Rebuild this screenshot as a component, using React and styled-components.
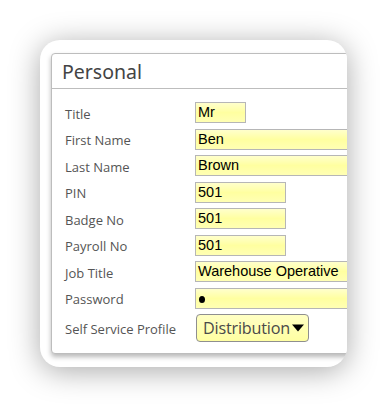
import React from "react";
import styled, { createGlobalStyle } from "styled-components";

const Global = createGlobalStyle`
  html, body { margin: 0; padding: 0; background: #ffffff; }
  body { width: 387px; height: 407px; overflow: hidden; }
`;

const Page = styled.div`
  padding: 40px 0 0 40px;
`;

const Card = styled.div`
  width: 307px;
  height: 327px;
  box-sizing: border-box;
  background: #ffffff;
  border-radius: 20px;
  box-shadow: 0 4px 30px rgba(0, 0, 0, 0.34);
  overflow: hidden;
  padding: 13px 0 0 11px;
`;

const Panel = styled.section`
  width: 420px;
  box-sizing: border-box;
  border: 1px solid #bdbdbd;
  border-radius: 4px 0 0 4px;
  background: #ffffff;
  box-shadow: 0 3px 5px rgba(0, 0, 0, 0.28);
`;

const Header = styled.h2`
  margin: 0;
  height: 35px;
  box-sizing: border-box;
  border-bottom: 1px solid #bdbdbd;
  padding: 6px 0 0 10px;
  font-family: "Noto Sans", sans-serif;
  font-weight: 400;
  font-size: 19.5px;
  line-height: 24px;
  color: #444444;
`;

const Body = styled.div`
  display: grid;
  grid-template-columns: 130px 1fr;
  row-gap: 5.5px;
  align-items: center;
  padding: 13px 0 11px 13px;
`;

const Label = styled.label`
  font-family: "Open Sans", sans-serif;
  font-size: 13px;
  color: #555555;
  line-height: 18px;
  padding-top: 2px;
`;

const Input = styled.div`
  box-sizing: border-box;
  height: 21px;
  width: ${(p) => p.$w || "300px"};
  border: 1px solid #b6b6b6;
  background: linear-gradient(to bottom, #ffffcc 0%, #ffffa0 50%, #ffffb4 100%);
  font-family: "Liberation Sans", Arial, sans-serif;
  font-size: 14.5px;
  line-height: 19px;
  color: #000000;
  padding-left: 2px;
  white-space: nowrap;
  overflow: hidden;
`;

const Dot = styled.span`
  display: inline-block;
  width: 6px;
  height: 7px;
  border-radius: 50%;
  background: #000;
  margin: 7px 0 0 1px;
  vertical-align: top;
`;

const Select = styled.div`
  box-sizing: border-box;
  height: 28px;
  width: 113px;
  margin-left: 1px;
  display: flex;
  align-items: center;
  gap: 2px;
  padding-left: 6px;
  border: 1px solid #8f8f8f;
  border-radius: 4px;
  background: linear-gradient(to bottom, #ffffc4, #ffffa2);
  font-family: "Open Sans", sans-serif;
  font-size: 16.2px;
  letter-spacing: -0.2px;
  color: #4a4a4a;
`;

const Arrow = styled.svg`
  width: 12px;
  height: 8px;
  flex: none;
`;

const fields = [
  ["Title", "Mr", "51px"],
  ["First Name", "Ben"],
  ["Last Name", "Brown"],
  ["PIN", "501", "91px"],
  ["Badge No", "501", "91px"],
  ["Payroll No", "501", "91px"],
  ["Job Title", "Warehouse Operative"],
];

export default function App() {
  return (
    <>
      <Global />
      <Page>
        <Card>
          <Panel>
            <Header>Personal</Header>
            <Body>
              {fields.map(([l, v, w]) => (
                <React.Fragment key={l}>
                  <Label>{l}</Label>
                  <Input $w={w}>{v}</Input>
                </React.Fragment>
              ))}
              <Label>Password</Label>
              <Input>
                <Dot />
              </Input>
              <Label>Self Service Profile</Label>
              <Select>
                Distribution
                <Arrow viewBox="0 0 12 8">
                  <path d="M0 0.5 L12 0.5 L6 7.5 Z" fill="#000" />
                </Arrow>
              </Select>
            </Body>
          </Panel>
        </Card>
      </Page>
    </>
  );
}
